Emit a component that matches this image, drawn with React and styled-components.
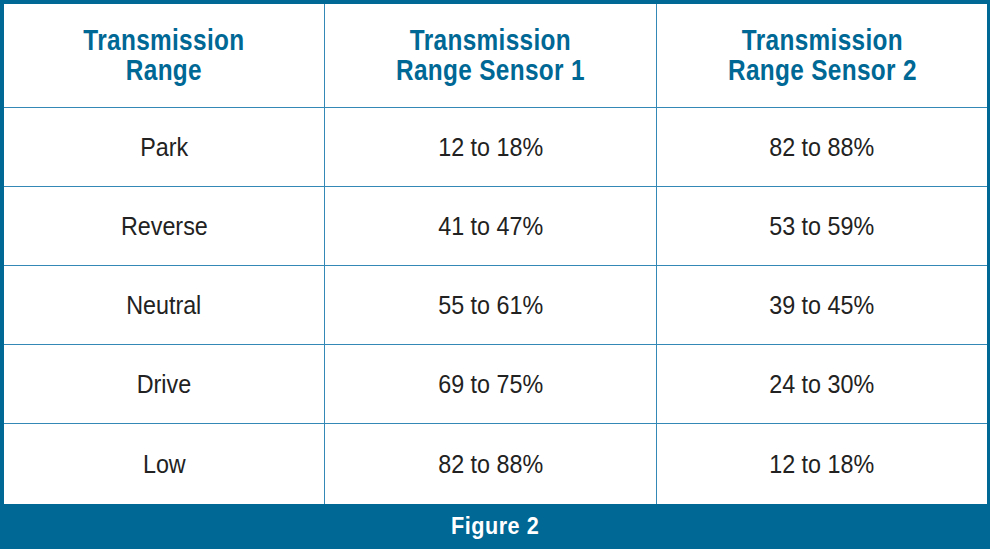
import React from 'react';
import styled, { createGlobalStyle } from 'styled-components';

const GlobalStyle = createGlobalStyle`
  html, body {
    margin: 0;
    padding: 0;
    background: #ffffff;
  }
  * {
    box-sizing: border-box;
  }
`;

const blue = '#006895';
const line = '#3388b6';
const sans = `"Liberation Sans", Arial, sans-serif`;

const Frame = styled.div`
  width: 990px;
  height: 549px;
  display: flex;
  flex-direction: column;
  border-top: 4px solid ${blue};
  border-left: 4px solid ${blue};
  border-right: 3px solid ${blue};
  background: #ffffff;
`;

const Table = styled.div`
  display: grid;
  grid-template-columns: 321px 332px 330px;
  grid-template-rows: 104px repeat(4, 79px) 80px;
  flex: none;
`;

const Cell = styled.div`
  display: flex;
  align-items: center;
  justify-content: center;
  text-align: center;
  border-right: ${(p) => (p.$last ? 'none' : `1px solid ${line}`)};
  border-bottom: ${(p) => (p.$bottom ? 'none' : `1px solid ${line}`)};
  font-family: ${sans};
`;

// the source face is a condensed grotesque, so squeeze Arial metrics
const Squeeze = styled.span`
  display: inline-block;
  white-space: nowrap;
  transform: scaleX(${(p) => p.$x});
`;

const HeadCell = styled(Cell)`
  color: ${blue};
  font-weight: 700;
  font-size: 29px;
  line-height: 30px;
  letter-spacing: 0.4px;
  padding-bottom: 1px;
`;

const DataCell = styled(Cell)`
  color: #222222;
  font-size: 26.5px;
`;

const Caption = styled.div`
  flex: 1;
  margin-left: -4px;
  margin-right: -3px;
  background: ${blue};
  color: #ffffff;
  display: flex;
  align-items: center;
  justify-content: center;
  font-family: ${sans};
  font-weight: 700;
  font-size: 24px;
  letter-spacing: 0.6px;
  padding-bottom: 1px;
`;

const headers = [
  ['Transmission', 'Range'],
  ['Transmission', 'Range Sensor 1'],
  ['Transmission', 'Range Sensor 2'],
];

const rows = [
  ['Park', '12 to 18%', '82 to 88%'],
  ['Reverse', '41 to 47%', '53 to 59%'],
  ['Neutral', '55 to 61%', '39 to 45%'],
  ['Drive', '69 to 75%', '24 to 30%'],
  ['Low', '82 to 88%', '12 to 18%'],
];

const App = () => {
  return (
    <>
      <GlobalStyle />
      <Frame>
        <Table>
          {headers.map((h, i) => (
            <HeadCell key={i} $last={i === 2}>
              <Squeeze $x={0.84}>
                {h[0]}
                <br />
                {h[1]}
              </Squeeze>
            </HeadCell>
          ))}
          {rows.map((r, ri) =>
            r.map((v, ci) => (
              <DataCell
                key={`${ri}-${ci}`}
                $last={ci === 2}
                $bottom={ri === rows.length - 1}
              >
                <Squeeze $x={0.88}>{v}</Squeeze>
              </DataCell>
            ))
          )}
        </Table>
        <Caption>
          <Squeeze $x={0.9}>Figure 2</Squeeze>
        </Caption>
      </Frame>
    </>
  );
};

export default App;
